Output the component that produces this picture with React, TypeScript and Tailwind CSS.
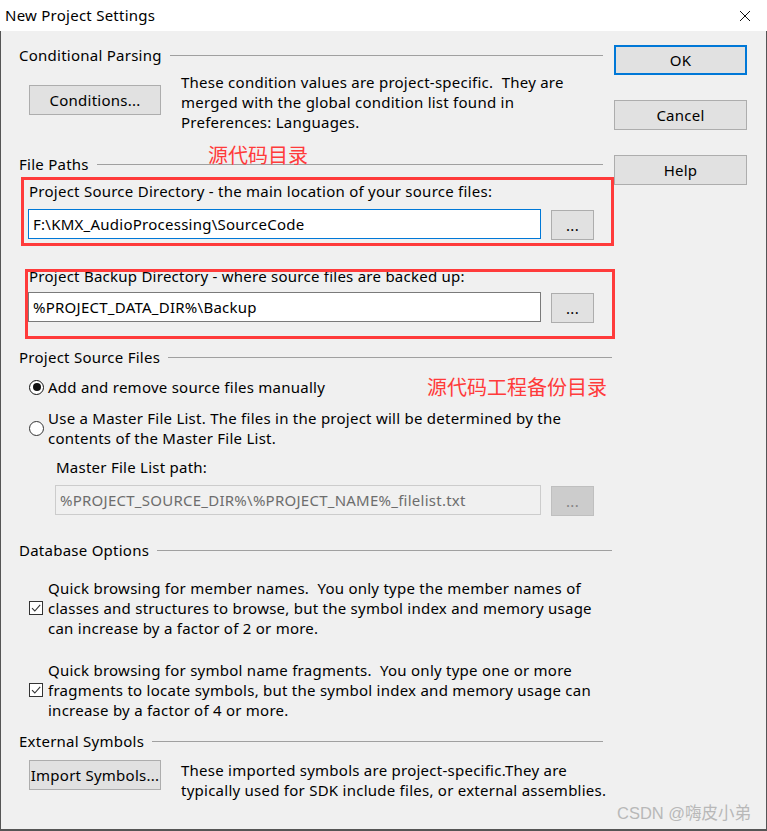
import type { ReactNode } from "react";

const font = { fontFamily: '"Noto Sans", "Noto Sans CJK SC", sans-serif', letterSpacing: "0.25px" };

function Header({ label, end = 603 }: { label: string; end?: number }) {
    return (
        <div className="flex h-5 items-center" style={{ width: end - 19 }}>
            <span className="leading-5">{label}</span>
            <div className="ml-2 h-px flex-1 bg-[#a0a0a0]" />
        </div>
    );
}

function Btn({ children, className = "" }: { children: ReactNode; className?: string }) {
    return (
        <div className={"flex h-[30px] items-center justify-center border border-[#adadad] bg-[#e1e1e1] " + className}>
            {children}
        </div>
    );
}

function PathRow({ value, focused = false, disabled = false, inputWidth = 513 }: { value: string; focused?: boolean; disabled?: boolean; inputWidth?: number }) {
    return (
        <div className="flex items-start">
            <div
                className={
                    "flex h-[30px] items-center px-[4px] " +
                    (disabled
                        ? "border border-[#cccccc] bg-[#f0f0f0] text-[#6d6d6d]"
                        : focused
                          ? "border border-[#0078d7] bg-white"
                          : "border border-[#7a7a7a] bg-white")
                }
                style={{ width: inputWidth }}
            >
                {value}
            </div>
            <div
                className={
                    "ml-[10px] mt-px flex h-[30px] w-[43px] items-center justify-center border " +
                    (disabled ? "border-[#bfbfbf] bg-[#cccccc] text-[#838383]" : "border-[#adadad] bg-[#e1e1e1]")
                }
            >
                ...
            </div>
        </div>
    );
}

function Checkbox() {
    return (
        <div className="flex h-[14px] w-[14px] shrink-0 items-center justify-center border border-[#333333] bg-white">
            <svg width="12" height="12" viewBox="0 0 12 12">
                <path d="M2 6.2 L4.8 9 L10.2 2.8" fill="none" stroke="#333333" strokeWidth="1.1" />
            </svg>
        </div>
    );
}

export default function App() {
    return (
        <div className="w-[767px] h-[831px] bg-white text-[15px] text-black" style={font}>
            <div className="flex h-[31px] items-center justify-between bg-white pl-[5px] pr-[16px]">
                <span className="text-[15px]">New Project Settings</span>
                <svg width="12" height="12" viewBox="0 0 12 12">
                    <path d="M1 1 L11 11 M11 1 L1 11" stroke="#111" strokeWidth="1" />
                </svg>
            </div>

            <div className="flex h-[800px] border-x border-b-2 border-[#555555] bg-[#f0f0f0]">
                <div className="relative w-[613px] pl-[18px] pt-[14px]">
                    <Header label="Conditional Parsing" />
                    <div className="mt-[7px] flex items-start">
                        <Btn className="ml-[10px] mt-[13px] w-[132px]">Conditions...</Btn>
                        <p className="ml-[20px] w-[400px] leading-5">
                            These condition values are project-specific.&nbsp; They are merged with the global condition list found in Preferences: Languages.
                        </p>
                    </div>

                    <div className="mt-[22px]">
                        <Header label="File Paths" />
                    </div>
                    <div className="relative mt-[7px] pl-[10px]">
                        <div className="absolute left-[2px] top-[-4px] h-[69px] w-[593px] border-[3px] border-[#ff3b3b]" />
                        <div className="leading-5">Project Source Directory - the main location of your source files:</div>
                        <div className="mt-[8px] -ml-px">
                            <PathRow value="F:\KMX_AudioProcessing\SourceCode" focused />
                        </div>
                    </div>
                    <div className="absolute left-[207px] top-[111px] text-[20px] leading-7 tracking-normal text-[#ff3b3b]">源代码目录</div>

                    <div className="relative mt-[26px] pl-[10px]">
                        <div className="leading-5">Project Backup Directory - where source files are backed up:</div>
                        <div className="mt-[6px] -ml-px">
                            <PathRow value="%PROJECT_DATA_DIR%\Backup" />
                        </div>
                        <div className="absolute left-[6px] top-[3px] h-[70px] w-[590px] border-[3px] border-[#ff3b3b]" />
                    </div>

                    <div className="mt-[24px]">
                        <Header label="Project Source Files" end={612} />
                    </div>
                    <div className="mt-[10px] flex items-center pl-[10px]">
                        <div className="flex h-[15px] w-[15px] items-center justify-center rounded-full border border-[#111] bg-white">
                            <div className="h-[8px] w-[8px] rounded-full bg-[#111]" />
                        </div>
                        <span className="ml-[4px] leading-5">Add and remove source files manually</span>
                    </div>
                    <div className="mt-[11px] flex items-center pl-[10px]">
                        <div className="h-[15px] w-[15px] shrink-0 rounded-full border border-[#333] bg-white" />
                        <p className="ml-[4px] w-[530px] leading-5">
                            Use a Master File List. The files in the project will be determined by the contents of the Master File List.
                        </p>
                    </div>
                    <div className="absolute left-[426px] top-[343px] text-[20px] leading-7 tracking-normal text-[#ff3b3b]">源代码工程备份目录</div>
                    <div className="mt-[9px] pl-[37px] leading-5">Master File List path:</div>
                    <div className="mt-[8px] pl-[36px]">
                        <PathRow value="%PROJECT_SOURCE_DIR%\%PROJECT_NAME%_filelist.txt" disabled inputWidth={486} />
                    </div>

                    <div className="mt-[24px]">
                        <Header label="Database Options" end={612} />
                    </div>
                    <div className="mt-[18px] flex items-center pl-[10px]">
                        <Checkbox />
                        <p className="ml-[5px] w-[552px] leading-5">
                            Quick browsing for member names.&nbsp; You only type the member names of classes and structures to browse, but the symbol index and memory usage can increase by a factor of 2 or more.
                        </p>
                    </div>
                    <div className="mt-[22px] flex items-center pl-[10px]">
                        <Checkbox />
                        <p className="ml-[5px] w-[552px] leading-5">
                            Quick browsing for symbol name fragments.&nbsp; You only type one or more fragments to locate symbols, but the symbol index and memory usage can increase by a factor of 4 or more.
                        </p>
                    </div>

                    <div className="mt-[11px]">
                        <Header label="External Symbols" />
                    </div>
                    <div className="mt-[9px] flex items-start">
                        <Btn className="ml-[10px] w-[132px]">Import Symbols...</Btn>
                        <p className="ml-[20px] w-[428px] leading-5">
                            These imported symbols are project-specific.They are typically used for SDK include files, or external assemblies.
                        </p>
                    </div>
                </div>

                <div className="flex flex-1 flex-col pt-[14px]">
                    <div className="flex h-[30px] w-[133px] items-center justify-center border-2 border-[#0078d7] bg-[#e1e1e1]">OK</div>
                    <Btn className="mt-[25px] w-[133px]">Cancel</Btn>
                    <Btn className="mt-[25px] w-[133px]">Help</Btn>
                    <div className="mt-auto mb-[6px] ml-[3px] text-[16.5px] leading-5 tracking-normal text-[#b8b8b8]" style={{ fontFamily: '"Liberation Sans", "Noto Sans CJK SC", sans-serif' }}>
                        CSDN @嗨皮小弟
                    </div>
                </div>
            </div>
        </div>
    );
}
